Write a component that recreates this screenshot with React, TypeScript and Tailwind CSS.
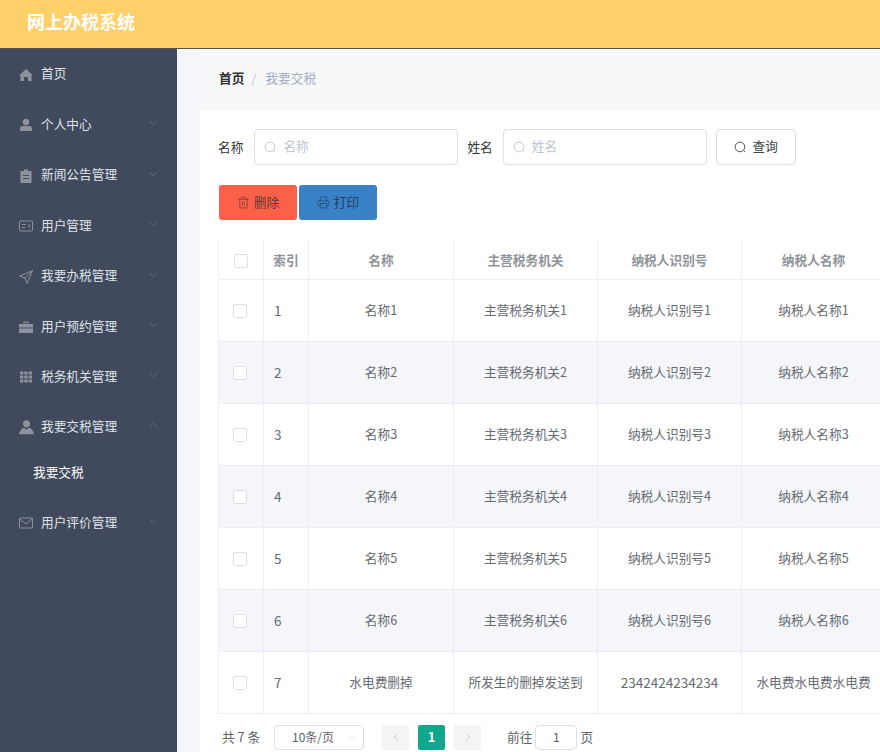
import { ChevronDown, ChevronLeft, ChevronRight, ChevronUp, Printer, Trash2 } from 'lucide-react';

const font = { fontFamily: '"Noto Sans CJK SC", "Noto Sans", sans-serif' };

function HomeIcon() {
  return (
    <svg viewBox="0 0 14 14" className="h-[14px] w-[14px]" fill="currentColor">
      <path d="M7 1 L14 7.4 L12.6 7.4 L12.6 13 L9 13 L9 9 L5 9 L5 13 L1.4 13 L1.4 7.4 L0 7.4 Z" />
    </svg>
  );
}

function UserIcon() {
  return (
    <svg viewBox="0 0 14 14" className="h-[14px] w-[14px]" fill="currentColor">
      <circle cx="7" cy="4" r="3.2" />
      <path d="M1 13 V10.6 C1 8.8 2.6 8 4 8 H10 C11.4 8 13 8.8 13 10.6 V13 Z" />
    </svg>
  );
}

function ClipboardIcon() {
  return (
    <svg viewBox="0 0 14 14" className="h-[14px] w-[14px]" fill="currentColor">
      <path fillRule="evenodd" d="M5 0.5 H9 V2 H12.5 V14 H1.5 V2 H5 Z M4 6 V7 H10 V6 Z M4 9 V10 H10 V9 Z" />
    </svg>
  );
}

function CardIcon() {
  return (
    <svg viewBox="0 0 14 14" className="h-[14px] w-[14px]" fill="none" stroke="currentColor" strokeWidth="1">
      <rect x="0.5" y="2" width="13" height="10" rx="1" />
      <path d="M3 5.5 H7 M3 8.5 H6 M10 5 V9" />
    </svg>
  );
}

function PlaneIcon() {
  return (
    <svg viewBox="0 0 14 14" className="h-[14px] w-[14px]" fill="none" stroke="currentColor" strokeWidth="1">
      <path d="M13.5 0.8 L0.6 6 L6 8 L8.2 13.4 Z M13.5 0.8 L6 8" />
    </svg>
  );
}

function CaseIcon() {
  return (
    <svg viewBox="0 0 14 14" className="h-[14px] w-[14px]" fill="currentColor">
      <path fillRule="evenodd" d="M4.5 1.5 H9.5 V4 H14 V7.4 H0 V4 H4.5 Z M5.6 2.6 V4 H8.4 V2.6 Z" />
      <path d="M0 8.4 H14 V13 H0 Z" />
    </svg>
  );
}

function GridIcon() {
  return (
    <svg viewBox="0 0 14 14" className="h-[14px] w-[14px]" fill="currentColor">
      <path d="M1 1.5h3.4v3H1zM5.3 1.5h3.4v3H5.3zM9.6 1.5H13v3H9.6zM1 5.5h3.4v3H1zM5.3 5.5h3.4v3H5.3zM9.6 5.5H13v3H9.6zM1 9.5h3.4v3H1zM5.3 9.5h3.4v3H5.3zM9.6 9.5H13v3H9.6z" />
    </svg>
  );
}

function CustomIcon() {
  return (
    <svg viewBox="0 0 14 14" className="h-[15px] w-[15px]" fill="currentColor">
      <circle cx="7" cy="3.6" r="3.3" />
      <path d="M4.6 7.2 L7 9 L9.4 7.2 C11.6 7.8 13.6 10 14 13.4 H0 C0.4 10 2.4 7.8 4.6 7.2 Z" />
    </svg>
  );
}

function MailIcon() {
  return (
    <svg viewBox="0 0 14 14" className="h-[14px] w-[14px]" fill="none" stroke="currentColor" strokeWidth="1">
      <rect x="0.5" y="2" width="13" height="10" rx="1" />
      <path d="M1 3 L7 8 L13 3" />
    </svg>
  );
}

function SearchIcon() {
  return (
    <svg viewBox="0 0 14 14" className="mr-[6px] h-[13px] w-[13px]" fill="none" stroke="currentColor" strokeWidth="1">
      <circle cx="6.4" cy="6.4" r="5.2" />
      <path d="M10.2 10.2 L12 12" />
    </svg>
  );
}

const menu = [
  { label: '首页', icon: <HomeIcon />, height: 'h-[51px]', labelPad: 'pb-[4px]' },
  { label: '个人中心', icon: <UserIcon />, arrow: true, height: 'h-[50px]' },
  { label: '新闻公告管理', icon: <ClipboardIcon />, arrow: true, height: 'h-[51px]', labelPad: 'pb-[4px]' },
  { label: '用户管理', icon: <CardIcon />, arrow: true, height: 'h-[50px]' },
  { label: '我要办税管理', icon: <PlaneIcon />, arrow: true, height: 'h-[51px]', labelPad: 'pb-[4px]' },
  { label: '用户预约管理', icon: <CaseIcon />, arrow: true, height: 'h-[50px]' },
  { label: '税务机关管理', icon: <GridIcon />, arrow: true, height: 'h-[50px]' },
  { label: '我要交税管理', icon: <CustomIcon />, open: true, height: 'h-[50px]' },
];

const rows = [
  ['1', '名称1', '主营税务机关1', '纳税人识别号1', '纳税人名称1'],
  ['2', '名称2', '主营税务机关2', '纳税人识别号2', '纳税人名称2'],
  ['3', '名称3', '主营税务机关3', '纳税人识别号3', '纳税人名称3'],
  ['4', '名称4', '主营税务机关4', '纳税人识别号4', '纳税人名称4'],
  ['5', '名称5', '主营税务机关5', '纳税人识别号5', '纳税人名称5'],
  ['6', '名称6', '主营税务机关6', '纳税人识别号6', '纳税人名称6'],
  ['7', '水电费删掉', '所发生的删掉发送到', '2342424234234', '水电费水电费水电费'],
];

function MenuItem({ label, icon, arrow, open, height, labelPad = 'pb-[2px]' }: { label: string; icon: React.ReactNode; arrow?: boolean; open?: boolean; height: string; labelPad?: string }) {
  return (
    <div className={`flex items-center pl-[19px] pr-[17px] text-[12.7px] text-[#dfe2e9] ${height}`}>
      <span className="flex w-[22px] shrink-0 justify-start text-[#8d929c]">{icon}</span>
      <span className={`flex-1 ${labelPad}`}>{label}</span>
      {arrow ? <ChevronDown size={14} strokeWidth={1} className="mb-[4px] text-[#7d8494]" /> : null}
      {open ? <ChevronUp size={14} strokeWidth={1} className="mb-[4px] text-[#7d8494]" /> : null}
    </div>
  );
}

function Checkbox({ className }: { className: string }) {
  return <span className={`mx-auto block h-[14px] w-[14px] rounded-[2px] border border-[#dcdfe6] bg-white ${className}`} />;
}

function SearchInput({ placeholder }: { placeholder: string }) {
  return (
    <div className="flex h-[36px] w-[204px] items-center rounded border border-[#dcdfe6] bg-white pl-[9px] text-[12.7px] text-[#c0c4cc]">
      <SearchIcon />
      <span className="pb-[2px]">{placeholder}</span>
    </div>
  );
}

export default function App() {
  return (
    <div className="flex h-[752px] w-[880px] flex-col overflow-hidden bg-white" style={font}>
      <header className="flex h-[49px] shrink-0 items-center border-b border-[#5a5344] bg-[#fdd06a] pb-[5px] pl-[27px] text-[18px] font-bold text-white">
        网上办税系统
      </header>
      <div className="flex min-h-0 flex-1">
        <aside className="w-[177px] shrink-0 bg-[#414a5c]">
          {menu.map((item) => (
            <MenuItem key={item.label} {...item} />
          ))}
          <div className="flex h-[46px] items-center pb-[6px] pl-[33px] text-[12.7px] text-white">我要交税</div>
          <MenuItem label="用户评价管理" icon={<MailIcon />} arrow height="h-[50px]" />
        </aside>
        <main className="min-w-0 flex-1 bg-[#f4f6f9]">
          <div className="ml-[23px] flex h-[61px] items-center bg-[#f7f8f9] pb-[3px] pl-[19px] text-[12.7px]">
            <span className="font-bold text-[#303133]">首页</span>
            <span className="ml-[7px] mr-[9px] text-[#c0c4cc]">/</span>
            <span className="text-[#a3acc0]">我要交税</span>
          </div>
          <section className="ml-[23px] h-full bg-white pl-[18px]">
            <div className="flex items-center pt-[19px] text-[12.7px] text-[#333]">
              <span className="mr-[11px] pb-[1px]">名称</span>
              <SearchInput placeholder="名称" />
              <span className="ml-[9px] mr-[10px] pb-[1px]">姓名</span>
              <SearchInput placeholder="姓名" />
              <button className="ml-[9px] flex h-[36px] w-[80px] items-center justify-center rounded border border-[#dcdfe6] bg-white text-[#444]">
                <SearchIcon />
                <span className="pb-[2px]">查询</span>
              </button>
            </div>
            <div className="ml-[1px] mt-[20px] flex gap-[2px] text-[12.7px]">
              <button className="flex h-[35px] w-[78px] items-center justify-center rounded-[3px] bg-[#fd6049] text-[#5c3a34]">
                <Trash2 size={13} strokeWidth={1.2} className="mr-[4px]" />
                <span className="pb-[2px]">删除</span>
              </button>
              <button className="flex h-[35px] w-[78px] items-center justify-center rounded-[3px] bg-[#3a82c8] text-[#233d5b]">
                <Printer size={13} strokeWidth={1.2} className="mr-[4px]" />
                <span className="pb-[2px]">打印</span>
              </button>
            </div>
            <table className="mt-[20px] w-[667px] table-fixed border-collapse text-[12.7px] text-[#666a70]">
              <colgroup>
                <col className="w-[45px]" />
                <col className="w-[45px]" />
                <col className="w-[145px]" />
                <col className="w-[144px]" />
                <col className="w-[144px]" />
                <col className="w-[144px]" />
              </colgroup>
              <thead>
                <tr className="h-[39px] border-b border-[#ebeef5] font-bold text-[#909399]">
                  <th className="border-x border-[#ebeef5]"><Checkbox className="mt-[3px]" /></th>
                  <th className="border-r border-[#ebeef5]">索引</th>
                  <th className="border-r border-[#ebeef5]">名称</th>
                  <th className="border-r border-[#ebeef5]">主营税务机关</th>
                  <th className="border-r border-[#ebeef5]">纳税人识别号</th>
                  <th className="border-r border-[#ebeef5]">纳税人名称</th>
                </tr>
              </thead>
              <tbody>
                {rows.map((row, index) => (
                  <tr key={row[0]} className={`h-[62px] border-b border-[#ebeef5] ${index % 2 === 1 ? 'bg-[#f4f6fa]' : 'bg-white'}`}>
                    <td className="border-x border-[#ebeef5] pr-[3px]"><Checkbox className="mt-[2px]" /></td>
                    <td className="border-r border-[#ebeef5] pl-[10px] text-[13.5px]">{row[0]}</td>
                    <td className="border-r border-[#ebeef5] text-center">{row[1]}</td>
                    <td className="border-r border-[#ebeef5] text-center">{row[2]}</td>
                    <td className={`border-r border-[#ebeef5] text-center ${index === 6 ? 'text-[13.5px]' : ''}`}>{row[3]}</td>
                    <td className="border-r border-[#ebeef5] text-center">{row[4]}</td>
                  </tr>
                ))}
              </tbody>
            </table>
            <div className="mt-[11px] flex items-center pl-[4px] text-[12.7px] text-[#606266]">
              <span className="mr-[13px] w-[39px] whitespace-nowrap">共 7 条</span>
              <div className="mr-[18px] flex h-[25px] w-[90px] items-center justify-between rounded border border-[#dcdfe6] pl-[17px] pr-[6px] text-[12px]">
                10条/页
                <ChevronDown size={11} strokeWidth={1} className="text-[#c0c4cc]" />
              </div>
              <span className="mr-[9px] flex h-[25px] w-[27px] items-center justify-center rounded-[2px] bg-[#f4f4f5] text-[#c0c4cc]"><ChevronLeft size={14} strokeWidth={1.5} /></span>
              <span className="mr-[9px] flex h-[25px] w-[27px] items-center justify-center rounded-[2px] bg-[#10a78d] font-bold text-white">1</span>
              <span className="mr-[26px] flex h-[25px] w-[27px] items-center justify-center rounded-[2px] bg-[#f4f4f5] text-[#c0c4cc]"><ChevronRight size={14} strokeWidth={1.5} /></span>
              <span>前往</span>
              <span className="ml-[3px] mr-[3px] flex h-[25px] w-[42px] items-center justify-center rounded border border-[#dcdfe6]">1</span>
              <span>页</span>
            </div>
          </section>
        </main>
      </div>
    </div>
  );
}
